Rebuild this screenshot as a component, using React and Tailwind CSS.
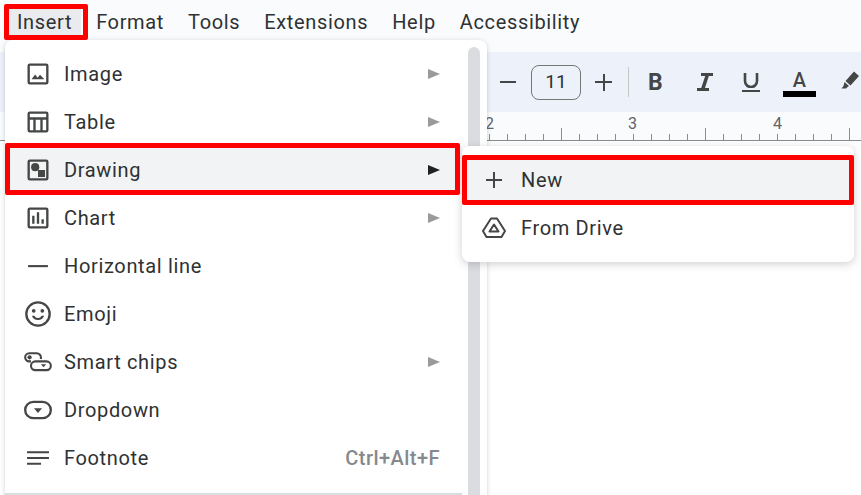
import React from "react";

const Ic = ({ children, size = 28, vb = 24 }) => (
  <svg width={size} height={size} viewBox={`0 0 ${vb} ${vb}`} className="shrink-0 text-[#444746]" fill="currentColor">{children}</svg>
);

const icons = {
  image: <Ic><path fillRule="evenodd" d="M5 3h14a2 2 0 0 1 2 2v14a2 2 0 0 1-2 2H5a2 2 0 0 1-2-2V5a2 2 0 0 1 2-2zm0 2v14h14V5H5z" /><path d="M6.5 16.5l3-4 2.2 2.8 2-2.6 3.8 3.8z" /></Ic>,
  table: <Ic><path fillRule="evenodd" d="M5 3h14a2 2 0 0 1 2 2v14a2 2 0 0 1-2 2H5a2 2 0 0 1-2-2V5a2 2 0 0 1 2-2zm0 2v3h14V5H5zm0 5v9h3v-9H5zm5 0v9h4v-9h-4zm6 0v9h3v-9h-3z" /></Ic>,
  drawing: <Ic><path fillRule="evenodd" d="M5 3h14a2 2 0 0 1 2 2v14a2 2 0 0 1-2 2H5a2 2 0 0 1-2-2V5a2 2 0 0 1 2-2zm0 2v14h14V5H5z" /><circle cx="9.6" cy="9.6" r="3.5" /><path d="M12 12h6v6h-6z" /></Ic>,
  chart: <Ic><path fillRule="evenodd" d="M5 3h14a2 2 0 0 1 2 2v14a2 2 0 0 1-2 2H5a2 2 0 0 1-2-2V5a2 2 0 0 1 2-2zm0 2v14h14V5H5z" /><path d="M7 10h2v7H7zM11 7h2v10h-2zM15 13h2v4h-2z" /></Ic>,
  line: <Ic><path d="M3.5 11.2h17v1.8h-17z" /></Ic>,
  emoji: <Ic><path fillRule="evenodd" d="M12 1a11 11 0 1 1 0 22 11 11 0 0 1 0-22zm0 2a9 9 0 1 0 0 18 9 9 0 0 0 0-18z" /><circle cx="8.3" cy="9.3" r="1.6" /><circle cx="15.7" cy="9.3" r="1.6" /><path d="M6.8 13.5h2.1a3.4 3.4 0 0 0 6.2 0h2.1a5.5 5.5 0 0 1-10.4 0z" /></Ic>,
  chips: <Ic><g fill="none" stroke="currentColor" strokeWidth="1.8"><path d="M14.5 9.5V8a3.5 3.5 0 0 0-3.5-3.5H4.5a3.5 3.5 0 0 0 0 7H6" /><rect x="6" y="11.5" width="17" height="7.5" rx="3.75" /></g><circle cx="4.8" cy="8" r="1.8" /><path d="M14.5 14h4.5l-2.25 2.4z" /></Ic>,
  dropdown: <Ic><rect x="1" y="5" width="22" height="14" rx="7" fill="none" stroke="currentColor" strokeWidth="2" /><path d="M8.5 10.5h7L12 14.5z" /></Ic>,
  footnote: <Ic><path d="M2.6 6.2h18.8V8H2.6zM2.6 11.1h18.8v1.8H2.6zM2.6 16h12v1.8h-12z" /></Ic>,
};

const Row = ({ icon, label, arrow, dark, shortcut, active }) => (
  <div className={`h-12 shrink-0 flex items-center pl-[19px] pr-[22px] ${active ? "bg-[#f1f3f4]" : ""}`}>
    <span className="w-[40px] flex items-center">{icon}</span>
    <span className="text-[20px] tracking-[0.65px] text-[#2f3133]">{label}</span>
    <span className="flex-1" />
    {arrow && <span className={`w-0 h-0 border-y-[5.5px] border-y-transparent border-l-[12px] ${dark ? "border-l-[#202124]" : "border-l-[#9a9a9a]"}`} />}
    {shortcut && <span className="text-[20px] font-medium tracking-[0.45px] text-[#85898e]">{shortcut}</span>}
  </div>
);

const ticks = Array.from({ length: 21 }, (_, i) => i);

export default function App() {
  return (
    <div className="relative w-[861px] h-[495px] overflow-hidden bg-white font-['Roboto',sans-serif] flex flex-col">
      {/* menu bar */}
      <div className="h-[52px] shrink-0 bg-[#f9fbfd] flex items-start pt-[6px] pl-[8px] text-[20px] tracking-[0.65px] text-[#2f3133]">
        <span className="px-[9px] h-[32px] leading-[32px] bg-[#e9ebee] rounded-[2px]">Insert</span>
        <div className="flex gap-[24px] leading-[32px] ml-[15px]">
          <span>Format</span><span>Tools</span><span>Extensions</span><span>Help</span><span>Accessibility</span>
        </div>
      </div>
      {/* toolbar */}
      <div className="h-[60px] shrink-0 bg-[#edf2fa] flex items-center pl-[500px] text-[#444746]">
        <span className="w-[16px] h-[2px] bg-[#444746]" />
        <span className="ml-[15px] w-[50px] h-[35px] border border-[#747775] rounded-[8px] flex items-center justify-center text-[19px] text-[#2f3133]">11</span>
        <span className="ml-[14px] w-[17px] h-[17px] relative">
          <span className="absolute left-0 top-[7.5px] w-[17px] h-[2px] bg-[#444746]" />
          <span className="absolute left-[7.5px] top-0 w-[2px] h-[17px] bg-[#444746]" />
        </span>
        <span className="ml-[16px] w-px h-[30px] bg-[#c7c7c7]" />
        <span className="ml-[19px] text-[23px] font-bold w-[17px] leading-none">B</span>
        <svg width="18" height="20" viewBox="0 0 18 20" className="ml-[31px]" fill="currentColor"><path d="M5 1h12v3h-4.2L9 16h4v3H1v-3h4.2L9.2 4H5z" /></svg>
        <span className="ml-[28px] flex flex-col items-center w-[18px]">
          <svg width="16" height="15" viewBox="0 0 16 15" fill="none" stroke="currentColor" strokeWidth="2.6"><path d="M2 0v8a6 6 0 0 0 12 0V0" /></svg>
          <span className="w-[18px] h-[2px] bg-[#444746] mt-[2px]" />
        </span>
        <span className="ml-[23px] flex flex-col items-center w-[33px] mt-[3px]">
          <span className="text-[20px] leading-[20px] h-[20px] font-medium">A</span>
          <span className="w-[33px] h-[6px] bg-black mt-[1px]" />
        </span>
        <svg width="21" height="20" viewBox="0 0 20 20" className="ml-[24px] mb-[4px]" fill="currentColor"><path d="M13.5 1.5l5 4.5-8.5 9.5-5-4.5zM4 12l4.5 4-2 1.5-1 1H1l2-2.5z" /></svg>
      </div>
      {/* ruler */}
      <div className="h-[29px] shrink-0 bg-[#f9fbfd] relative border-b border-[#8a8d90] text-[#5f6368] text-[16px] leading-[20px]">
        <span className="absolute left-[485px] top-[2px]">2</span>
        <span className="absolute left-[628px] top-[2px]">3</span>
        <span className="absolute left-[773px] top-[2px]">4</span>
        {ticks.map((i) => (
          <span key={i} className="absolute bottom-0 w-px h-[6px] bg-[#8a8d90]" style={{ left: 489 + i * 18 }} />
        ))}
        {[561, 705, 849].map((x) => (
          <span key={x} className="absolute bottom-0 w-px h-[12px] bg-[#8a8d90]" style={{ left: x }} />
        ))}
      </div>
      <div className="flex-1 bg-white" />

      {/* Insert menu */}
      <div className="absolute left-[5px] top-[40px] w-[482px] h-[470px] bg-white rounded-[8px] shadow-[0_1px_4px_rgba(60,64,67,0.25)] flex">
        <div className="w-[457px] pt-[10px] flex flex-col overflow-hidden">
          <Row icon={icons.image} label="Image" arrow />
          <Row icon={icons.table} label="Table" arrow />
          <Row icon={icons.drawing} label="Drawing" arrow dark active />
          <Row icon={icons.chart} label="Chart" arrow />
          <Row icon={icons.line} label="Horizontal line" />
          <Row icon={icons.emoji} label="Emoji" />
          <Row icon={icons.chips} label="Smart chips" arrow />
          <Row icon={icons.dropdown} label="Dropdown" />
          <Row icon={icons.footnote} label="Footnote" shortcut="Ctrl+Alt+F" />
          <div className="h-[2px] mt-[11px] bg-[#dadce0] shrink-0" />
        </div>
        <div className="ml-[6px] mt-[7px] w-[12px] h-[460px] bg-[#dadce0] rounded-t-[6px]" />
      </div>

      {/* Drawing submenu */}
      <div className="absolute left-[462px] top-[146px] w-[392px] h-[116px] bg-white rounded-[8px] shadow-[0_2px_8px_rgba(60,64,67,0.25)] pt-[10px] flex flex-col">
        <div className="h-12 flex items-center pl-[21px] bg-[#f1f3f4]">
          <span className="w-[38px] flex"><svg width="22" height="22" viewBox="0 0 22 22" className="text-[#444746]" fill="currentColor"><path d="M3 10h7V3h2v7h7v2h-7v7h-2v-7H3z" /></svg></span>
          <span className="text-[20px] tracking-[0.65px] text-[#2f3133]">New</span>
        </div>
        <div className="h-12 flex items-center pl-[20px]">
          <span className="w-[39px] flex"><svg width="24" height="24" viewBox="0 0 24 24" fill="none" stroke="#444746" strokeWidth="2" strokeLinejoin="round"><path d="M9 2.5h6l8 12.5-3.5 6h-15L1 15z" /><path d="M12 8.5l4.5 7h-9z" /></svg></span>
          <span className="text-[20px] tracking-[0.65px] text-[#2f3133]">From Drive</span>
        </div>
      </div>

      {/* red annotation boxes */}
      <div className="absolute left-[4px] top-[4px] w-[84px] h-[36px] border-[5px] border-[#ff0000] rounded-[2px]" />
      <div className="absolute left-[5px] top-[143px] w-[455px] h-[52px] border-[5px] border-[#ff0000] rounded-[2px]" />
      <div className="absolute left-[462px] top-[155px] w-[392px] h-[50px] border-[5px] border-[#ff0000] rounded-[2px]" />
    </div>
  );
}
